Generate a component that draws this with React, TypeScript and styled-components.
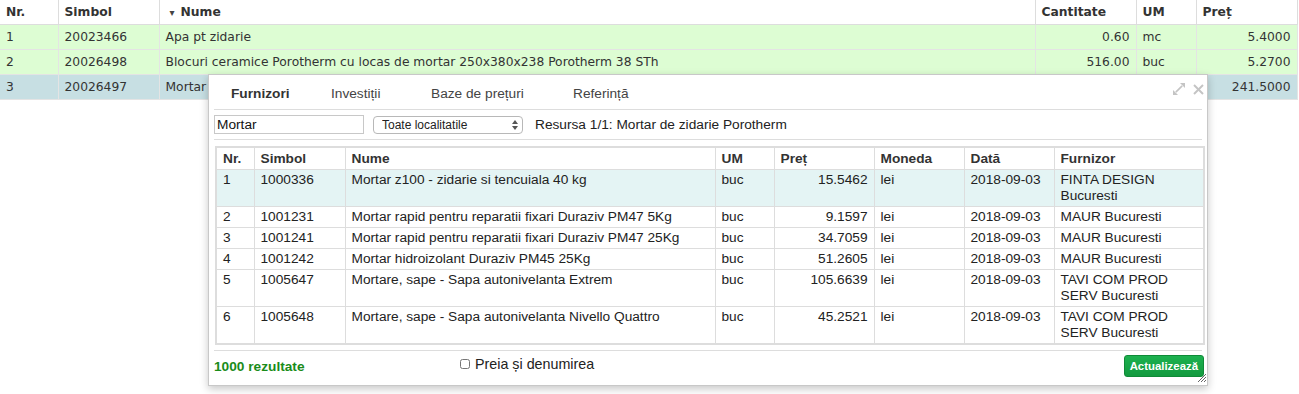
import { createGlobalStyle, styled } from 'styled-components';

interface MainRow {
  nr: number;
  simbol: string;
  nume: string;
  cantitate: string;
  um: string;
  pret: string;
  selected?: boolean;
}

interface OfferRow {
  nr: number;
  simbol: string;
  nume: string;
  um: string;
  pret: string;
  moneda: string;
  data: string;
  furnizor: string;
  active?: boolean;
}

const mainRows: MainRow[] = [
  { nr: 1, simbol: '20023466', nume: 'Apa pt zidarie', cantitate: '0.60', um: 'mc', pret: '5.4000' },
  {
    nr: 2,
    simbol: '20026498',
    nume: 'Blocuri ceramice Porotherm cu locas de mortar 250x380x238 Porotherm 38 STh',
    cantitate: '516.00',
    um: 'buc',
    pret: '5.2700',
  },
  { nr: 3, simbol: '20026497', nume: 'Mortar de zidarie Porotherm', cantitate: '', um: '', pret: '241.5000', selected: true },
];

const offers: OfferRow[] = [
  { nr: 1, simbol: '1000336', nume: 'Mortar z100 - zidarie si tencuiala 40 kg', um: 'buc', pret: '15.5462', moneda: 'lei', data: '2018-09-03', furnizor: 'FINTA DESIGN Bucuresti', active: true },
  { nr: 2, simbol: '1001231', nume: 'Mortar rapid pentru reparatii fixari Duraziv PM47 5Kg', um: 'buc', pret: '9.1597', moneda: 'lei', data: '2018-09-03', furnizor: 'MAUR Bucuresti' },
  { nr: 3, simbol: '1001241', nume: 'Mortar rapid pentru reparatii fixari Duraziv PM47 25Kg', um: 'buc', pret: '34.7059', moneda: 'lei', data: '2018-09-03', furnizor: 'MAUR Bucuresti' },
  { nr: 4, simbol: '1001242', nume: 'Mortar hidroizolant Duraziv PM45 25Kg', um: 'buc', pret: '51.2605', moneda: 'lei', data: '2018-09-03', furnizor: 'MAUR Bucuresti' },
  { nr: 5, simbol: '1005647', nume: 'Mortare, sape - Sapa autonivelanta Extrem', um: 'buc', pret: '105.6639', moneda: 'lei', data: '2018-09-03', furnizor: 'TAVI COM PROD SERV Bucuresti' },
  { nr: 6, simbol: '1005648', nume: 'Mortare, sape - Sapa autonivelanta Nivello Quattro', um: 'buc', pret: '45.2521', moneda: 'lei', data: '2018-09-03', furnizor: 'TAVI COM PROD SERV Bucuresti' },
];

const mainCols = [58, 101, 876, 101, 60, 101];
const offerCols = [38, 91, 370, 59, 100, 90, 90, 150];
const tabs = [
  { label: 'Furnizori', width: 100 },
  { label: 'Investiții', width: 100 },
  { label: 'Baze de prețuri', width: 142 },
  { label: 'Referință', width: 80 },
];

const GlobalStyle = createGlobalStyle`
  html, body {
    margin: 0;
    padding: 0;
    background: #fff;
  }
  body {
    width: 1299px;
    height: 394px;
    overflow: hidden;
    font-family: "DejaVu Sans", Verdana, sans-serif;
    color: #333;
  }
`;

const ExpandIcon = () => (
  <svg width="12" height="12" viewBox="0 0 12 12" fill="#c4c4c4">
    <polygon points="7,0 12,0 12,5" />
    <polygon points="0,7 0,12 5,12" />
    <rect x="5.2" y="1.5" width="1.6" height="9" transform="rotate(45 6 6)" />
  </svg>
);

const CloseIcon = () => (
  <svg width="11" height="11" viewBox="0 0 11 11" stroke="#c4c4c4" strokeWidth="2">
    <line x1="1" y1="1" x2="10" y2="10" />
    <line x1="10" y1="1" x2="1" y2="10" />
  </svg>
);

const SelectArrows = () => (
  <svg width="6" height="10" viewBox="0 0 6 10" fill="#555">
    <polygon points="3,0 6,4 0,4" />
    <polygon points="0,6 6,6 3,10" />
  </svg>
);

const Grip = () => (
  <svg width="9" height="9" viewBox="0 0 9 9" stroke="#666" strokeWidth="1">
    <line x1="9" y1="1" x2="1" y2="9" />
    <line x1="9" y1="4" x2="4" y2="9" />
    <line x1="9" y1="7" x2="7" y2="9" />
  </svg>
);

const App = () => (
  <Page>
    <GlobalStyle />
    <MainTable>
      <colgroup>
        {mainCols.map((w, i) => (
          <col key={i} style={{ width: w }} />
        ))}
      </colgroup>
      <thead>
        <tr>
          <MainTh>Nr.</MainTh>
          <MainTh>Simbol</MainTh>
          <MainTh>
            <SortArrow>▾</SortArrow>Nume
          </MainTh>
          <MainTh>Cantitate</MainTh>
          <MainTh>UM</MainTh>
          <MainTh>Preț</MainTh>
        </tr>
      </thead>
      <tbody>
        {mainRows.map((r) => (
          <MainTr key={r.nr} $selected={r.selected}>
            <MainTd>{r.nr}</MainTd>
            <MainTd>{r.simbol}</MainTd>
            <MainTd>{r.nume}</MainTd>
            <MainTd $right>{r.cantitate}</MainTd>
            <MainTd>{r.um}</MainTd>
            <MainTd $right>{r.pret}</MainTd>
          </MainTr>
        ))}
      </tbody>
    </MainTable>

    <Dialog>
      <TabBar>
        {tabs.map((t, i) => (
          <Tab key={t.label} $active={i === 0} $width={t.width}>
            {t.label}
          </Tab>
        ))}
        <WindowButtons>
          <ExpandIcon />
          <CloseIcon />
        </WindowButtons>
      </TabBar>

      <SearchRow>
        <SearchInput defaultValue="Mortar" />
        <SelectWrap>
          <LocalitySelect defaultValue="all">
            <option value="all">Toate localitatile</option>
          </LocalitySelect>
          <ArrowSlot>
            <SelectArrows />
          </ArrowSlot>
        </SelectWrap>
        <ResourceLabel>Resursa 1/1: Mortar de zidarie Porotherm</ResourceLabel>
      </SearchRow>

      <TableFrame>
        <OfferTable>
          <colgroup>
            {offerCols.map((w, i) => (
              <col key={i} style={{ width: w }} />
            ))}
          </colgroup>
          <thead>
            <tr>
              <OfferTh>Nr.</OfferTh>
              <OfferTh>Simbol</OfferTh>
              <OfferTh>Nume</OfferTh>
              <OfferTh>UM</OfferTh>
              <OfferTh>Preț</OfferTh>
              <OfferTh>Moneda</OfferTh>
              <OfferTh>Dată</OfferTh>
              <OfferTh>Furnizor</OfferTh>
            </tr>
          </thead>
          <tbody>
            {offers.map((o) => (
              <OfferTr key={o.nr} $active={o.active}>
                <OfferTd>{o.nr}</OfferTd>
                <OfferTd>{o.simbol}</OfferTd>
                <OfferTd>{o.nume}</OfferTd>
                <OfferTd>{o.um}</OfferTd>
                <OfferTd $right>{o.pret}</OfferTd>
                <OfferTd>{o.moneda}</OfferTd>
                <OfferTd>{o.data}</OfferTd>
                <OfferTd>{o.furnizor}</OfferTd>
              </OfferTr>
            ))}
          </tbody>
        </OfferTable>
      </TableFrame>

      <Footer>
        <ResultCount>1000 rezultate</ResultCount>
        <CheckLabel>
          <CheckBox type="checkbox" />
          Preia și denumirea
        </CheckLabel>
        <UpdateButton>Actualizează</UpdateButton>
        <GripSlot>
          <Grip />
        </GripSlot>
      </Footer>
    </Dialog>
  </Page>
);

const Page = styled.div`
  position: relative;
  width: 1299px;
  height: 394px;
`;

const MainTable = styled.table`
  width: 1297px;
  table-layout: fixed;
  border-collapse: collapse;
  font-size: 12.3px;
`;

const MainTh = styled.th`
  height: 24px;
  padding: 0 6px;
  text-align: left;
  font-weight: bold;
  color: #333;
  border-right: 1px solid #ddd;
  border-bottom: 1px solid #ddd;
  white-space: nowrap;
`;

const SortArrow = styled.span`
  display: inline-block;
  font-size: 10px;
  margin: 0 6px 0 4px;
  color: #444;
`;

const MainTr = styled.tr<{ $selected?: boolean }>`
  background: ${({ $selected }) => ($selected ? '#c7dfe3' : '#ddfdd3')};
`;

const MainTd = styled.td<{ $right?: boolean }>`
  height: 24px;
  padding: 0 6px;
  text-align: ${({ $right }) => ($right ? 'right' : 'left')};
  border-right: 1px solid #e4e4e4;
  border-bottom: 1px solid #e4e4e4;
  white-space: nowrap;
  overflow: hidden;
`;

const Dialog = styled.div`
  position: absolute;
  left: 208px;
  top: 74px;
  width: 1000px;
  height: 312px;
  box-sizing: border-box;
  background: #fff;
  border: 1px solid #c8c8c8;
  box-shadow: 0 3px 8px rgba(0, 0, 0, 0.22);
  padding: 0 5px;
  display: flex;
  flex-direction: column;
  font-family: "Liberation Sans", Arial, sans-serif;
  font-size: 13.7px;
  color: #222;
`;

const TabBar = styled.div`
  height: 35px;
  display: flex;
  align-items: center;
  border-bottom: 1px solid #ddd;
  padding-left: 17px;
  padding-top: 2px;
  box-sizing: border-box;
`;

const Tab = styled.div<{ $active?: boolean; $width: number }>`
  width: ${({ $width }) => $width}px;
  font-weight: ${({ $active }) => ($active ? 'bold' : 'normal')};
  color: ${({ $active }) => ($active ? '#333' : '#444')};
  white-space: nowrap;
`;

const WindowButtons = styled.div`
  margin-left: auto;
  display: flex;
  align-items: center;
  gap: 8px;
  margin-top: -8px;
  margin-right: -2px;
`;

const SearchRow = styled.div`
  height: 30px;
  display: flex;
  align-items: center;
  border-bottom: 1px solid #ddd;
  box-sizing: border-box;
`;

const SearchInput = styled.input`
  width: 150px;
  height: 19px;
  box-sizing: border-box;
  border: 1px solid #c8c8c8;
  padding: 0 2px;
  font-family: "Liberation Sans", Arial, sans-serif;
  font-size: 13.7px;
  color: #111;
  outline: none;
`;

const SelectWrap = styled.span`
  position: relative;
  margin-left: 9px;
  display: inline-flex;
`;

const LocalitySelect = styled.select`
  appearance: none;
  width: 150px;
  height: 18px;
  border: 1px solid #b8b8b8;
  border-radius: 4px;
  background: #fff;
  padding: 0 0 0 8px;
  font-family: "Liberation Sans", Arial, sans-serif;
  font-size: 12px;
  color: #222;
`;

const ArrowSlot = styled.span`
  position: absolute;
  right: 5px;
  top: 4px;
  display: flex;
  pointer-events: none;
`;

const ResourceLabel = styled.span`
  margin-left: 12px;
  color: #222;
`;

const TableFrame = styled.div`
  margin: 6px 0 0 1px;
  width: 988px;
`;

const OfferTable = styled.table`
  width: 988px;
  table-layout: fixed;
  border-collapse: collapse;
  border: 2px solid #ddd;
`;

const OfferTh = styled.th`
  height: 21px;
  padding: 3px 6px 2px;
  box-sizing: border-box;
  text-align: left;
  font-weight: bold;
  color: #333;
  border: 1px solid #ddd;
  line-height: 16px;
`;

const OfferTr = styled.tr<{ $active?: boolean }>`
  background: ${({ $active }) => ($active ? '#e4f4f4' : '#fff')};
`;

const OfferTd = styled.td<{ $right?: boolean }>`
  padding: 2px 6px;
  vertical-align: top;
  line-height: 16px;
  text-align: ${({ $right }) => ($right ? 'right' : 'left')};
  border: 1px solid #ddd;
  color: #222;
`;

const Footer = styled.div`
  position: relative;
  margin-top: 5px;
  flex: 1;
  border-top: 1px solid #ddd;
  display: flex;
  align-items: flex-start;
  padding-top: 5px;
`;

const ResultCount = styled.span`
  width: 246px;
  color: #1a8c1a;
  font-weight: bold;
  margin-top: 3px;
  line-height: 16px;
`;

const CheckLabel = styled.label`
  display: flex;
  align-items: center;
  gap: 5px;
  line-height: 16px;
  font-size: 14.3px;
  color: #222;
`;

const CheckBox = styled.input`
  width: 10px;
  height: 10px;
  margin: 0;
`;

const UpdateButton = styled.button`
  margin-left: auto;
  margin-top: -1px;
  margin-right: -2px;
  height: 22px;
  padding: 0 5px;
  background: linear-gradient(#1db14f, #139a3f);
  border: 1px solid #0f8a37;
  border-radius: 3px;
  color: #fff;
  font-family: "Liberation Sans", Arial, sans-serif;
  font-size: 11.4px;
  font-weight: bold;
`;

const GripSlot = styled.span`
  position: absolute;
  right: -4px;
  bottom: 3px;
  display: flex;
`;

export default App;
